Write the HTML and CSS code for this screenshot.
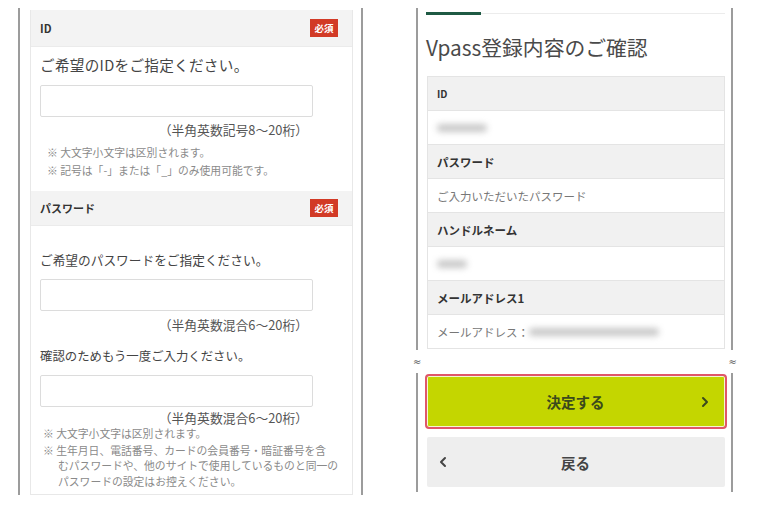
FILE: index.html
```html
<!DOCTYPE html>
<html lang="ja">
<head>
<meta charset="utf-8">
<title>Vpass</title>
<link rel="stylesheet" href="styles.css">
</head>
<body>
<div class="stage">
  <section class="phone phone-left">
    <div class="card">
      <div class="card-head head-id"><span class="head-title">ID</span><span class="req">必須</span></div>
      <div class="card-body body-id">
        <p class="label label-id">ご希望のIDをご指定ください。</p>
        <div class="field"><div class="input"></div><p class="hint hint-id">（半角英数記号8〜20桁）</p></div>
        <ul class="notes notes-id">
          <li>※ 大文字小文字は区別されます。</li>
          <li>※ 記号は「-」または「_」のみ使用可能です。</li>
        </ul>
      </div>
      <div class="card-head head-pw"><span class="head-title">パスワード</span><span class="req">必須</span></div>
      <div class="card-body body-pw">
        <p class="label label-pw1">ご希望のパスワードをご指定ください。</p>
        <div class="field"><div class="input input-pw1"></div><p class="hint hint-pw1">（半角英数混合6〜20桁）</p></div>
        <p class="label label-pw2">確認のためもう一度ご入力ください。</p>
        <div class="field"><div class="input input-pw2"></div><p class="hint hint-pw2">（半角英数混合6〜20桁）</p></div>
        <ul class="notes notes-pw">
          <li>※ 大文字小文字は区別されます。</li>
          <li>※ 生年月日、電話番号、カードの会員番号・暗証番号を含<br>むパスワードや、他のサイトで使用しているものと同一の<br>パスワードの設定はお控えください。</li>
        </ul>
      </div>
    </div>
  </section>

  <section class="right">
    <div class="phone phone-top">
      <div class="rule"><span class="rule-accent"></span><span class="rule-rest"></span></div>
      <h1 class="title">Vpass登録内容のご確認</h1>
      <div class="table">
        <div class="row row-head">ID</div>
        <div class="row row-val"><span class="blur blur-id"></span></div>
        <div class="row row-head">パスワード</div>
        <div class="row row-val">ご入力いただいたパスワード</div>
        <div class="row row-head">ハンドルネーム</div>
        <div class="row row-val"><span class="blur blur-name"></span></div>
        <div class="row row-head">メールアドレス1</div>
        <div class="row row-val">メールアドレス：<span class="blur blur-mail"></span></div>
      </div>
    </div>
    <div class="cut"><span>≈</span><span>≈</span></div>
    <div class="phone phone-bottom">
      <button class="btn btn-ok" type="button">
        <span class="btn-text">決定する</span>
        <svg class="chev chev-r" width="8" height="12" viewBox="0 0 8 12"><path d="M2 2 L6 6 L2 10" fill="none" stroke="#3b4a1c" stroke-width="2" stroke-linecap="round" stroke-linejoin="round"/></svg>
      </button>
      <button class="btn btn-back" type="button">
        <svg class="chev chev-l" width="8" height="12" viewBox="0 0 8 12"><path d="M6 2 L2 6 L6 10" fill="none" stroke="#444" stroke-width="2" stroke-linecap="round" stroke-linejoin="round"/></svg>
        <span class="btn-text">戻る</span>
      </button>
    </div>
  </section>
</div>
</body>
</html>
```

FILE: styles.css
```css
* { box-sizing: border-box; }
html, body { margin: 0; padding: 0; background: #fff; }
body {
  width: 768px; height: 510px; overflow: hidden;
  font-family: "Noto Sans CJK JP", "Noto Sans", sans-serif;
  color: #444;
}
p, ul, h1 { margin: 0; padding: 0; }
ul { list-style: none; }

.stage { display: flex; align-items: flex-start; padding-top: 8px; }

.phone-left {
  margin-left: 18px; width: 345px; height: 487px;
  border-left: 2px solid #5a5a5a; border-right: 2px solid #5a5a5a;
  padding: 2px 8px 0 10px;
}
.card { border: 1px solid #e8e8e8; border-top: none; height: 485px; }
.card-head {
  display: flex; align-items: center; justify-content: space-between;
  background: #f3f3f3; border-bottom: 1px solid #ebebeb;
  padding: 0 14px 0 9px;
}
.head-id { height: 37px; }
.head-pw { height: 35px; }
.head-title { font-size: 11px; font-weight: 700; color: #333; }
.req {
  width: 28px; height: 18px; background: #d23a26; color: #fff;
  font-size: 9.5px; line-height: 18px; text-align: center; font-weight: 700;
}
.card-body { padding: 0 9px; }
.body-id { padding-top: 8px; padding-bottom: 13px; }
.body-pw { padding-top: 25px; }

.label { font-size: 12.7px; line-height: 18px; color: #444; }
.label-id { font-size: 14.6px; letter-spacing: 0.3px; line-height: 20px; }
.label-pw2 { font-size: 12.4px; margin-top: 14px; }
.field { width: 273px; }
.input { height: 32px; border: 1px solid #dcdcdc; border-radius: 2px; background: #fff; }
.body-id .input { margin-top: 10px; }
.input-pw1 { margin-top: 10px; }
.input-pw2 { margin-top: 10px; }
.hint { font-size: 12.8px; line-height: 16px; text-align: right; color: #555; padding-right: 5px; }
.hint-id { margin-top: 5px; }
.hint-pw1 { margin-top: 6px; }
.hint-pw2 { margin-top: 3px; }

.notes { color: #8a8a8a; font-size: 10.8px; line-height: 16px; }
.notes li { padding-left: 15px; text-indent: -15px; }
.notes-id { margin-top: 6px; padding-left: 7px; }
.notes-id li + li { margin-top: 2px; }
.notes-pw { margin-top: 0; padding-left: 3px; font-size: 10.8px; line-height: 15.5px; white-space: nowrap; }
.notes-pw li + li { margin-top: 1px; }

.right { margin-left: 53px; width: 317px; }
.phone {
  border-left: 2px solid #9c9c9c; border-right: 2px solid #9c9c9c;
}
.phone-top { height: 342px; overflow: hidden; padding: 4px 6px 0 8px; }
.rule { display: flex; align-items: center; height: 3px; }
.rule-accent { width: 55px; height: 3px; background: #1f5a44; }
.rule-rest { flex: 1; height: 1px; background: #ececec; }
.title { font-size: 20.8px; font-weight: 400; line-height: 28px; color: #4a4a4a; margin-top: 18px; }
.table { margin-top: 15px; margin-left: 1px; border: 1px solid #e4e4e4; border-bottom: none; }
.row {
  height: 34px; display: flex; align-items: center; padding-left: 9px;
  font-size: 11.5px; border-bottom: 1px solid #e4e4e4;
}
.row-head { background: #f1f1f1; font-weight: 700; color: #333; }
.row-head:first-child { font-size: 10px; }
.row-val { background: #fff; color: #777; }
.blur { display: inline-block; height: 8px; background: #c8c8c8; filter: blur(3px); border-radius: 4px; }
.blur-id { width: 50px; }
.blur-name { width: 30px; }
.blur-mail { width: 130px; }

.cut {
  display: flex; justify-content: space-between; height: 23px;
  align-items: center; font-size: 10px; color: #555; margin: 0 -4px 0 -3px;
  font-family: "DejaVu Sans", sans-serif;
}
.phone-bottom { height: 119px; padding-top: 1px; display: flex; flex-direction: column; align-items: center; }
.btn {
  position: relative; display: flex; align-items: center; justify-content: center;
  font-family: inherit; font-weight: 700; font-size: 14.5px; cursor: pointer;
}
.btn-ok {
  width: 302px; height: 55px; margin-left: 2px;
  background: #c4d600; color: #3b4a1c;
  border: 2px solid #e0566a; border-radius: 4px;
  box-shadow: inset 0 0 0 1px #f4f8d0;
}
.btn-back {
  width: 298px; height: 50px; margin-top: 8px; margin-left: 2px;
  background: #eeeeee; color: #444; border: none; border-radius: 2px;
}
.chev { position: absolute; top: 50%; margin-top: -6px; }
.chev-r { right: 16px; }
.chev-l { left: 12px; }
```
